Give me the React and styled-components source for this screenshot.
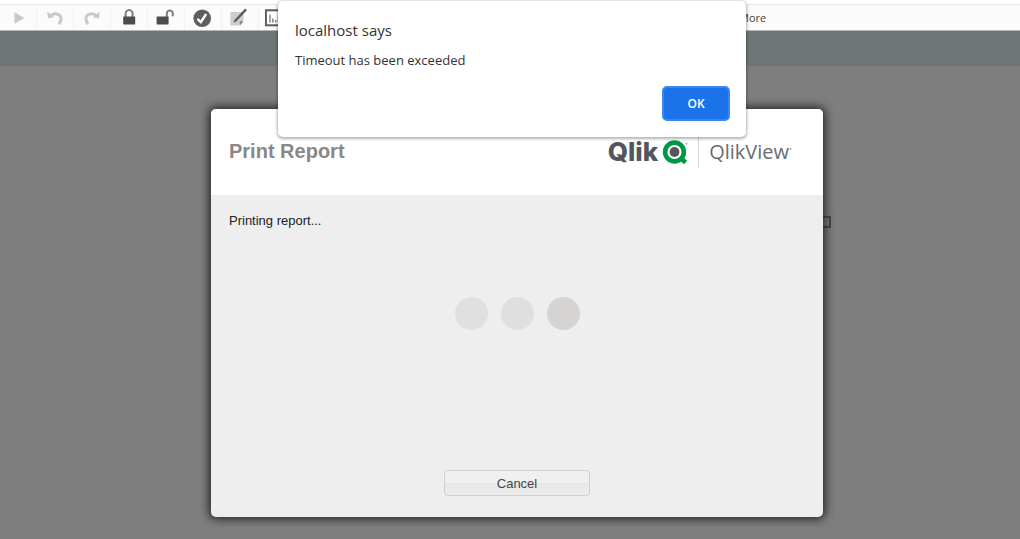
import React from "react";
import styled, { createGlobalStyle } from "styled-components";

export default function App() {
  return (
    <Page>
      <GlobalStyle />
      <Toolbar>
        <ToolButton aria-label="Play">
          <PlayIcon />
        </ToolButton>
        <ToolButton aria-label="Undo">
          <TurnIcon />
        </ToolButton>
        <ToolButton aria-label="Redo">
          <TurnIcon flip />
        </ToolButton>
        <ToolButton aria-label="Lock">
          <LockIcon />
        </ToolButton>
        <ToolButton aria-label="Unlock">
          <UnlockIcon />
        </ToolButton>
        <ToolButton aria-label="Apply">
          <CheckIcon />
        </ToolButton>
        <ToolButton aria-label="Notes">
          <NoteIcon />
        </ToolButton>
        <ToolButton aria-label="Reports">
          <ChartIcon />
        </ToolButton>
        <MoreButton>More</MoreButton>
      </Toolbar>
      <TabBand />
      <Sheet>
        <SheetObject>
          <SheetHandle />
        </SheetObject>
      </Sheet>

      <Overlay $top={109} $shift={14}>
        <Dialog role="dialog" aria-labelledby="print-title">
          <DialogHeader>
            <DialogTitle id="print-title">Print Report</DialogTitle>
            <Brand>
              <QlikWord>Qlik</QlikWord>
              <QlikMark />
              <Product>QlikView</Product>
              <TradeDot />
            </Brand>
          </DialogHeader>
          <DialogBody>
            <Status>Printing report...</Status>
            <Dots>
              <Dot $color="#e0e0e0" />
              <Dot $color="#e0dfe0" />
              <Dot $color="#d5d4d2" />
            </Dots>
            <CancelButton>Cancel</CancelButton>
          </DialogBody>
        </Dialog>
      </Overlay>

      <Overlay $top={1} $shift={4}>
        <Alert role="alertdialog" aria-labelledby="alert-title">
          <AlertTitle id="alert-title">localhost says</AlertTitle>
          <AlertText>Timeout has been exceeded</AlertText>
          <OkButton>OK</OkButton>
        </Alert>
      </Overlay>
    </Page>
  );
}

// Icons

function PlayIcon() {
  return (
    <svg width="20" height="20" viewBox="0 0 20 20">
      <path d="M6.5 4.2 L16.5 10 L6.5 15.8 Z" fill="#c8c8c8" />
    </svg>
  );
}

function TurnIcon({ flip }) {
  return (
    <svg width="20" height="20" viewBox="0 0 20 20">
      <g transform={flip ? "translate(20 0) scale(-1 1)" : undefined}>
        <path d="M5.5 8 C9 4 16.5 5.8 16 11.3 C15.9 13.2 15 14.8 13.6 15.8" fill="none" stroke="#c8c8c8" strokeWidth="3" />
        <path d="M2.2 3.4 L3 10.2 L9.2 9.2 Z" fill="#c8c8c8" />
      </g>
    </svg>
  );
}

function LockIcon() {
  return (
    <svg width="20" height="20" viewBox="0 0 20 20">
      <path d="M6.6 9 V6 a3.5 4 0 0 1 7 0 V9" fill="none" stroke="#7c7c7c" strokeWidth="2" />
      <rect x="4.2" y="8.4" width="12" height="8" rx="0.6" fill="#4c4c4c" />
    </svg>
  );
}

function UnlockIcon() {
  return (
    <svg width="20" height="20" viewBox="0 0 20 20">
      <path d="M10.8 9 V5.8 a3 3.2 0 0 1 6 0 V8.2" fill="none" stroke="#7c7c7c" strokeWidth="2" />
      <rect x="0.6" y="8.4" width="12" height="8" rx="0.6" fill="#4c4c4c" />
    </svg>
  );
}

function CheckIcon() {
  return (
    <svg width="20" height="20" viewBox="0 0 20 20">
      <circle cx="9.2" cy="10.2" r="8.8" fill="#5e5e5e" />
      <path d="M4.4 10.8 L7.8 14.2 L13.2 6" fill="none" stroke="#fff" strokeWidth="2.4" />
    </svg>
  );
}

function NoteIcon() {
  return (
    <svg width="20" height="20" viewBox="0 0 20 20">
      <path d="M0.4 4 H13.5 V13 L10 17.5 H0.4 Z" fill="#cdcdcd" />
      <path d="M13.5 13 L10 17.5 L9.6 13.2 Z" fill="#858585" />
      <path d="M5.8 12.2 L16 1.4" stroke="#5a5a5a" strokeWidth="2.4" />
      <path d="M3.6 14.4 L4.8 11 L7 13.2 Z" fill="#5a5a5a" />
    </svg>
  );
}

function ChartIcon() {
  return (
    <svg width="24" height="20" viewBox="0 0 24 20">
      <rect x="-0.1" y="2.3" width="20" height="15" fill="#fff" stroke="#5a5a5a" strokeWidth="2" transform="translate(1 0)" />
      <path d="M5 14.5 V6.5 M7.8 14.5 V10.5 M10.6 14.5 V12 M13.4 14.5 V7.5" stroke="#858585" strokeWidth="1.5" />
    </svg>
  );
}

function QlikMark() {
  return (
    <MarkSvg width="26" height="26" viewBox="0 0 26 26">
      <circle cx="12.5" cy="13" r="9.4" fill="none" stroke="#009845" strokeWidth="4.6" />
      <path d="M18 18.5 L23.6 23.4" stroke="#009845" strokeWidth="4.6" />
      <circle cx="12.5" cy="13" r="4.9" fill="#54565b" />
      <circle cx="24.5" cy="4.6" r="0.8" fill="#999" />
    </MarkSvg>
  );
}

function TradeDot() {
  return (
    <svg width="3" height="14" viewBox="0 0 3 14">
      <circle cx="1.5" cy="4" r="0.9" fill="#999" />
    </svg>
  );
}

// Page

const GlobalStyle = createGlobalStyle`
  * {
    box-sizing: border-box;
  }
  body {
    margin: 0;
    background: #7e7e7e;
    font-family: "Liberation Sans", Arial, sans-serif;
  }
  h1, h2, p {
    margin: 0;
  }
  button {
    font-family: inherit;
    cursor: pointer;
  }
`;

const Page = styled.div`
  display: flex;
  flex-direction: column;
  min-height: 100vh;
  overflow: hidden;
`;

const Toolbar = styled.div`
  display: flex;
  height: 31px;
  border-top: 4px solid #fff;
  border-bottom: 1px solid #b4b6b7;
  background: #fbfbfb;
  box-shadow: inset 0 1px 0 #e8e8e8;
`;

const ToolButton = styled.button`
  display: flex;
  align-items: center;
  justify-content: center;
  width: 37px;
  padding: 1px 0 0;
  border: 0;
  border-right: 1px solid #f1f1f1;
  background: none;
`;

const MoreButton = styled.button`
  margin-left: 443px;
  padding: 0;
  border: 0;
  background: none;
  color: #444;
  font-family: "Open Sans", sans-serif;
  font-size: 11px;
`;

const TabBand = styled.div`
  height: 35px;
  background: #6f7476;
`;

const Sheet = styled.div`
  display: flex;
  flex: 1;
  justify-content: center;
  padding: 140px 0 26px 48px;
`;

const SheetObject = styled.div`
  display: flex;
  justify-content: flex-end;
  width: 600px;
  padding: 9px 2px;
  border: 1px solid #797979;
`;

const SheetHandle = styled.div`
  width: 12px;
  height: 12px;
  border: 2px solid #484848;
`;

// Print dialog

const Overlay = styled.div`
  position: absolute;
  top: ${({ $top }) => $top}px;
  left: 0;
  right: 0;
  display: flex;
  justify-content: center;
  padding-left: ${({ $shift }) => $shift}px;
`;

const Dialog = styled.section`
  width: 612px;
  border-radius: 5px;
  background: #eee;
  box-shadow: 0 0 10px 2px #222;
  overflow: hidden;
`;

const DialogHeader = styled.header`
  display: flex;
  align-items: center;
  justify-content: space-between;
  height: 86px;
  padding: 0 31px 2px 18px;
  background: #fff;
`;

const DialogTitle = styled.h1`
  color: #888;
  font-size: 20px;
  line-height: 24px;
`;

const Brand = styled.div`
  display: flex;
  align-items: center;
  padding-top: 2px;
`;

const QlikWord = styled.span`
  color: #54565b;
  font-family: Inter, sans-serif;
  font-size: 26px;
  font-weight: 800;
  line-height: 32px;
`;

const MarkSvg = styled.svg`
  margin: 0 10px 0 4px;
`;

const Product = styled.span`
  padding-left: 10px;
  border-left: 1px solid #d4d4d4;
  color: #6a6b6e;
  font-family: "Open Sans", sans-serif;
  font-size: 20px;
  line-height: 32px;
`;

const DialogBody = styled.div`
  display: flex;
  flex-direction: column;
  align-items: center;
  padding: 18px 18px 21px;
`;

const Status = styled.p`
  align-self: flex-start;
  color: #222;
  font-size: 13px;
  line-height: 16px;
`;

const Dots = styled.div`
  display: flex;
  gap: 13px;
  padding: 68px 0 140px;
`;

const Dot = styled.span`
  width: 33px;
  height: 33px;
  border-radius: 50%;
  background: ${({ $color }) => $color};
`;

const CancelButton = styled.button`
  width: 146px;
  height: 26px;
  border: 1px solid #d0d0d0;
  border-radius: 4px;
  background: linear-gradient(#f0f0f0 50%, #e6e6e6 50%, #ededed);
  color: #444;
  font-size: 13px;
`;

// Browser alert

const Alert = styled.section`
  display: flex;
  flex-direction: column;
  width: 468px;
  padding: 19px 16px 16px 17px;
  border-radius: 5px;
  background: #fff;
  box-shadow: 0 1px 3px 1px rgba(0, 0, 0, 0.3);
  color: #333;
  font-family: "Open Sans", sans-serif;
`;

const AlertTitle = styled.h2`
  font-size: 15px;
  font-weight: 400;
  line-height: 20px;
`;

const AlertText = styled.p`
  padding: 10px 0 16px;
  font-size: 13px;
  line-height: 20px;
`;

const OkButton = styled.button`
  align-self: flex-end;
  width: 68px;
  height: 35px;
  border: 2px solid #3b87ee;
  border-radius: 5px;
  background: #1a73e8;
  color: #fff;
  font-size: 12px;
  font-weight: 600;
`;
